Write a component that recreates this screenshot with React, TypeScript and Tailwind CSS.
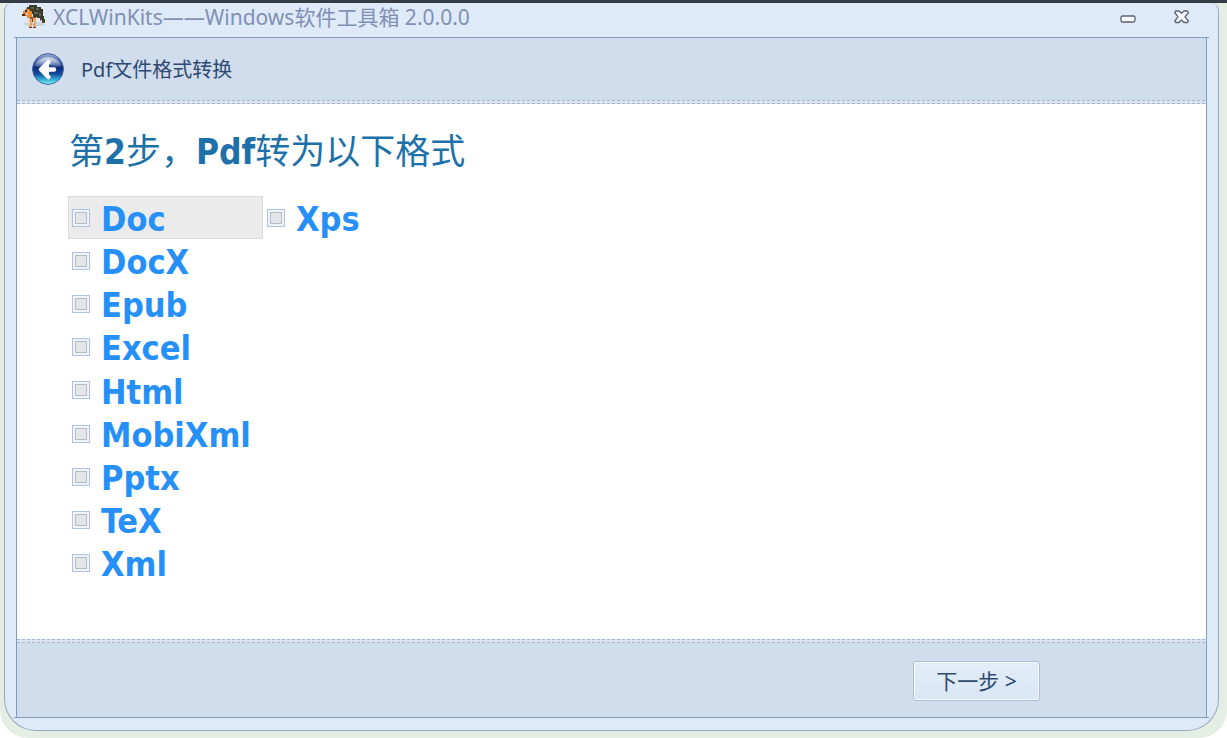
import { useState } from "react";

const FORMATS = ["Doc", "DocX", "Epub", "Excel", "Html", "MobiXml", "Pptx", "TeX", "Xml", "Xps"];

function AppLogo() {
  return (
    <svg width="24" height="24" viewBox="0 0 24 24" aria-hidden="true" className="shrink-0">
      <ellipse cx="12" cy="19" rx="11" ry="2" fill="#cbd3dc" />
      <path d="M5 2h2V0h8v2h4v2h2v7h1v3h1v4h-3v-3h-2v-2h-3v-1h-4V9H8V5H4z" fill="#3a3a2c" />
      <path d="M3 4h5v2h2v5H8v2H5v-2H2V9H1V6h2z" fill="#d98344" />
      <path d="M3 5h2v2H3zM0 9h3v2H0z" fill="#4f2d18" />
      <path d="M6 7h4v5H6z" fill="#f58a1c" />
      <path d="M5 6h2v1H5zM4 8h2v2H4z" fill="#f6c690" />
      <path d="M9 2h3v2H9zM14 3h3v2h-3zM12 7h4v2h-4zM17 8h2v3h-2z" fill="#5d6547" />
      <path d="M8 12h6v2H8z" fill="#9c5a2c" />
      <path d="M7 14h3v8H7zM11 13h3v9h-3z" fill="#e8a56c" />
      <path d="M7 16h1v4H7zM11 15h1v4h-1z" fill="#f8d0a4" />
      <path d="M7 22h3v1H7zM11 22h3v1h-3zM10 14h1v3h-1z" fill="#6b3f24" />
      <path d="M18 14h1v2h-1zM21 17h2v1h-2z" fill="#9c522a" />
    </svg>
  );
}

function BackIcon() {
  return (
    <svg width="34" height="34" viewBox="0 0 34 34" aria-hidden="true">
      <defs>
        <linearGradient id="ball" x1="0" y1="0" x2="0" y2="1">
          <stop offset="0" stopColor="#9aaed6" />
          <stop offset="0.28" stopColor="#4a68ad" />
          <stop offset="0.45" stopColor="#0c2a80" />
          <stop offset="0.65" stopColor="#12489b" />
          <stop offset="0.85" stopColor="#37b5dc" />
          <stop offset="1" stopColor="#8af2fa" />
        </linearGradient>
        <linearGradient id="gloss" x1="0" y1="0" x2="0" y2="1">
          <stop offset="0" stopColor="#fff" stopOpacity="0.75" />
          <stop offset="1" stopColor="#fff" stopOpacity="0.1" />
        </linearGradient>
      </defs>
      <circle cx="17" cy="17" r="16.5" fill="#e3ebf6" />
      <circle cx="17" cy="17" r="15.5" fill="url(#ball)" stroke="#4a6597" />
      <path d="M4 14a13.5 12 0 0 1 26 0c-6 3-8-1-13-1s-8 3-13 1z" fill="url(#gloss)" />
      <path
        d="M17.500 10L10 17.500L17.500 25M11 17.500H23"
        fill="none"
        stroke="#fff"
        strokeWidth="4.500"
        strokeLinecap="round"
        strokeLinejoin="round"
      />
      <path d="M18 11L11 17.500L18 24Z" fill="#fff" />
    </svg>
  );
}

function DashedRule() {
  return (
    <div className="flex flex-col gap-[2px] bg-[#d9e3f1]" aria-hidden="true">
      <div className="h-px bg-[repeating-linear-gradient(90deg,#a9b9cc_0_3px,#d9e3f1_3px_5px)]" />
      <div className="h-px bg-[repeating-linear-gradient(90deg,#a9b9cc_0_3px,#d9e3f1_3px_5px)]" />
    </div>
  );
}

export default function App() {
  const [selected, setSelected] = useState<string[]>([]);
  const toggle = (name: string) =>
    setSelected((list) => (list.includes(name) ? list.filter((n) => n !== name) : [...list, name]));

  return (
    <div className="flex min-h-screen flex-col bg-white font-['Noto_Sans','Noto_Sans_CJK_SC',sans-serif]">
      <div className="h-[3px] bg-[#353c45]" />
      <div className="flex flex-1 flex-col rounded-b-[28px] bg-[#e4eee5] pr-2 pb-[7px] pl-1">
        <div className="flex flex-1 flex-col rounded-t-lg rounded-b-[32px] border border-t-0 border-[#98a8bf] bg-[#deeaf7] px-[9px] pb-3">
          <header className="flex h-[34px] items-center pr-[18px] pb-[6px] pl-2">
            <AppLogo />
            <h1 className="ml-[7px] flex-1 text-[21px] leading-6 text-[#8090b5]">
              XCLWinKits——Windows软件工具箱 2.0.0.0
            </h1>
            <button type="button" aria-label="最小化" className="mr-9 p-px">
              <svg width="16" height="16" viewBox="0 0 16 16">
                <rect x="1" y="7" width="14" height="6" rx="1.5" fill="#f5f8fc" stroke="#5d6273" strokeWidth="1.3" />
              </svg>
            </button>
            <button type="button" aria-label="关闭" className="p-px">
              <svg width="16" height="16" viewBox="0 0 16 16">
                <path
                  d="M1.500 2H5L7.500 4.300L10 2H13.500L14.500 3.500L11 7.800L14.500 12L13.500 13.500H10L7.500 11L5 13.500H1.500L0.700 12L4 7.800L0.700 3.500Z"
                  fill="#f5f8fc"
                  stroke="#5d6273"
                  strokeWidth="1.3"
                  strokeLinejoin="round"
                />
              </svg>
            </button>
          </header>

          <div className="flex flex-1 flex-col border-y border-[#7f9cc0] px-[2px]">
            <div className="flex flex-1 flex-col border-x border-[#7f9cc0] bg-[#d0dded]">
              <nav className="flex h-[62px] items-center gap-4 pl-[14px]">
                <button type="button" aria-label="返回">
                  <BackIcon />
                </button>
                <span className="pt-[2px] text-[20px] leading-7 text-[#2f4a70]">Pdf文件格式转换</span>
              </nav>
              <DashedRule />

              <main className="flex-1 bg-white pt-7 pb-10 pl-[51px]">
                <h2 className="pl-px text-[35px] leading-10 text-[#1d71a8] font-['DejaVu_Sans_Condensed','Noto_Sans_CJK_SC',sans-serif]">
                  第<b className="font-bold">2</b>步，<b className="font-bold">Pdf</b>转为以下格式
                </h2>
                <div className="mt-6 grid h-[389px] grid-flow-col grid-cols-[195px_195px] grid-rows-9">
                  {FORMATS.map((name, i) => (
                    <label
                      key={name}
                      className={
                        i === 0
                          ? "flex items-center gap-[11px] border border-[#dcdcdc] bg-[#ebebeb] pl-[3px]"
                          : "flex items-center gap-[11px] border border-transparent pl-[3px]"
                      }
                    >
                      <input
                        type="checkbox"
                        checked={selected.includes(name)}
                        onChange={() => toggle(name)}
                        className="size-[18px] appearance-none border border-[#b0c3dc] bg-[#e4e5e8] shadow-[inset_0_0_0_2px_#f0f4f9,inset_0_0_0_3px_#b7bdc8] checked:bg-[#2a6fc0]"
                      />
                      <span className="pt-[2px] text-[34px] leading-10 font-bold text-[#2790f8] font-['DejaVu_Sans_Condensed',sans-serif]">
                        {name}
                      </span>
                    </label>
                  ))}
                </div>
              </main>

              <DashedRule />
              <footer className="flex h-[74px] items-center justify-end pt-[2px] pr-[166px]">
                <button
                  type="button"
                  className="h-10 w-[127px] rounded-[3px] border border-[#b0bfd6] bg-linear-to-b from-[#e3edf8] to-[#d8e6f4] text-[21px] leading-7 text-[#2f4a70] shadow-[inset_0_0_0_1px_#f4f8fc]"
                >
                  下一步 &gt;
                </button>
              </footer>
            </div>
          </div>
        </div>
      </div>
    </div>
  );
}
